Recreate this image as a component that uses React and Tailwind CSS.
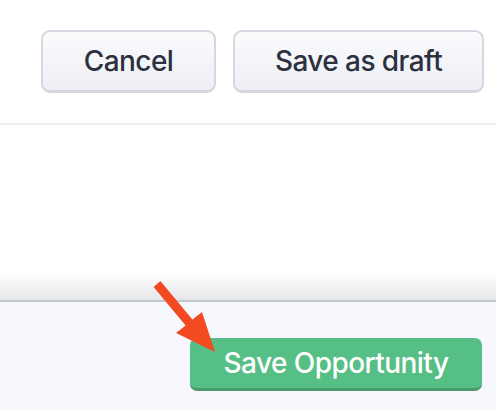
export default function App() {
  return (
    <div className="relative w-[496px] h-[410px] bg-white overflow-hidden font-['Inter',sans-serif]">
      <div className="flex justify-end gap-[17px] pt-[30px] pr-[12px] h-[123px]">
        <button className="w-[175px] h-[63px] rounded-[9px] border-2 border-b-[3px] border-[#d5d8e1] bg-gradient-to-b from-[#fbfbfd] to-[#edeff5] text-[28px] tracking-[-0.02em] font-medium text-[#2c3140]">
          Cancel
        </button>
        <button className="w-[251px] h-[63px] rounded-[9px] border-2 border-b-[3px] border-[#d5d8e1] bg-gradient-to-b from-[#fbfbfd] to-[#edeff5] text-[28px] tracking-[-0.02em] font-medium text-[#2c3140]">
          Save as draft
        </button>
      </div>
      <div className="h-[2px] bg-[#eceef4]" />
      <div className="h-[175px] bg-gradient-to-b from-white from-[84%] to-[#e6e7e9]" />
      <div className="h-[2px] bg-[#c4c7cc]" />
      <div className="flex justify-end pt-[36px] pr-[14px] h-[108px] bg-[#f7f8fd]">
        <button className="w-[292px] h-[53px] rounded-[7px] bg-[#56bf85] border-b-[3px] border-[#4a9a6a] text-[28px] tracking-[-0.02em] font-medium text-white">
          Save Opportunity
        </button>
      </div>
      <svg className="absolute left-0 top-0" width="496" height="410" viewBox="0 0 496 410">
        <polygon
          points="153.6,286.9 160.4,281.1 192.4,319.6 202,312 215,352 176,333 185.6,325.4"
          fill="#f44a22"
        />
      </svg>
    </div>
  )
}
